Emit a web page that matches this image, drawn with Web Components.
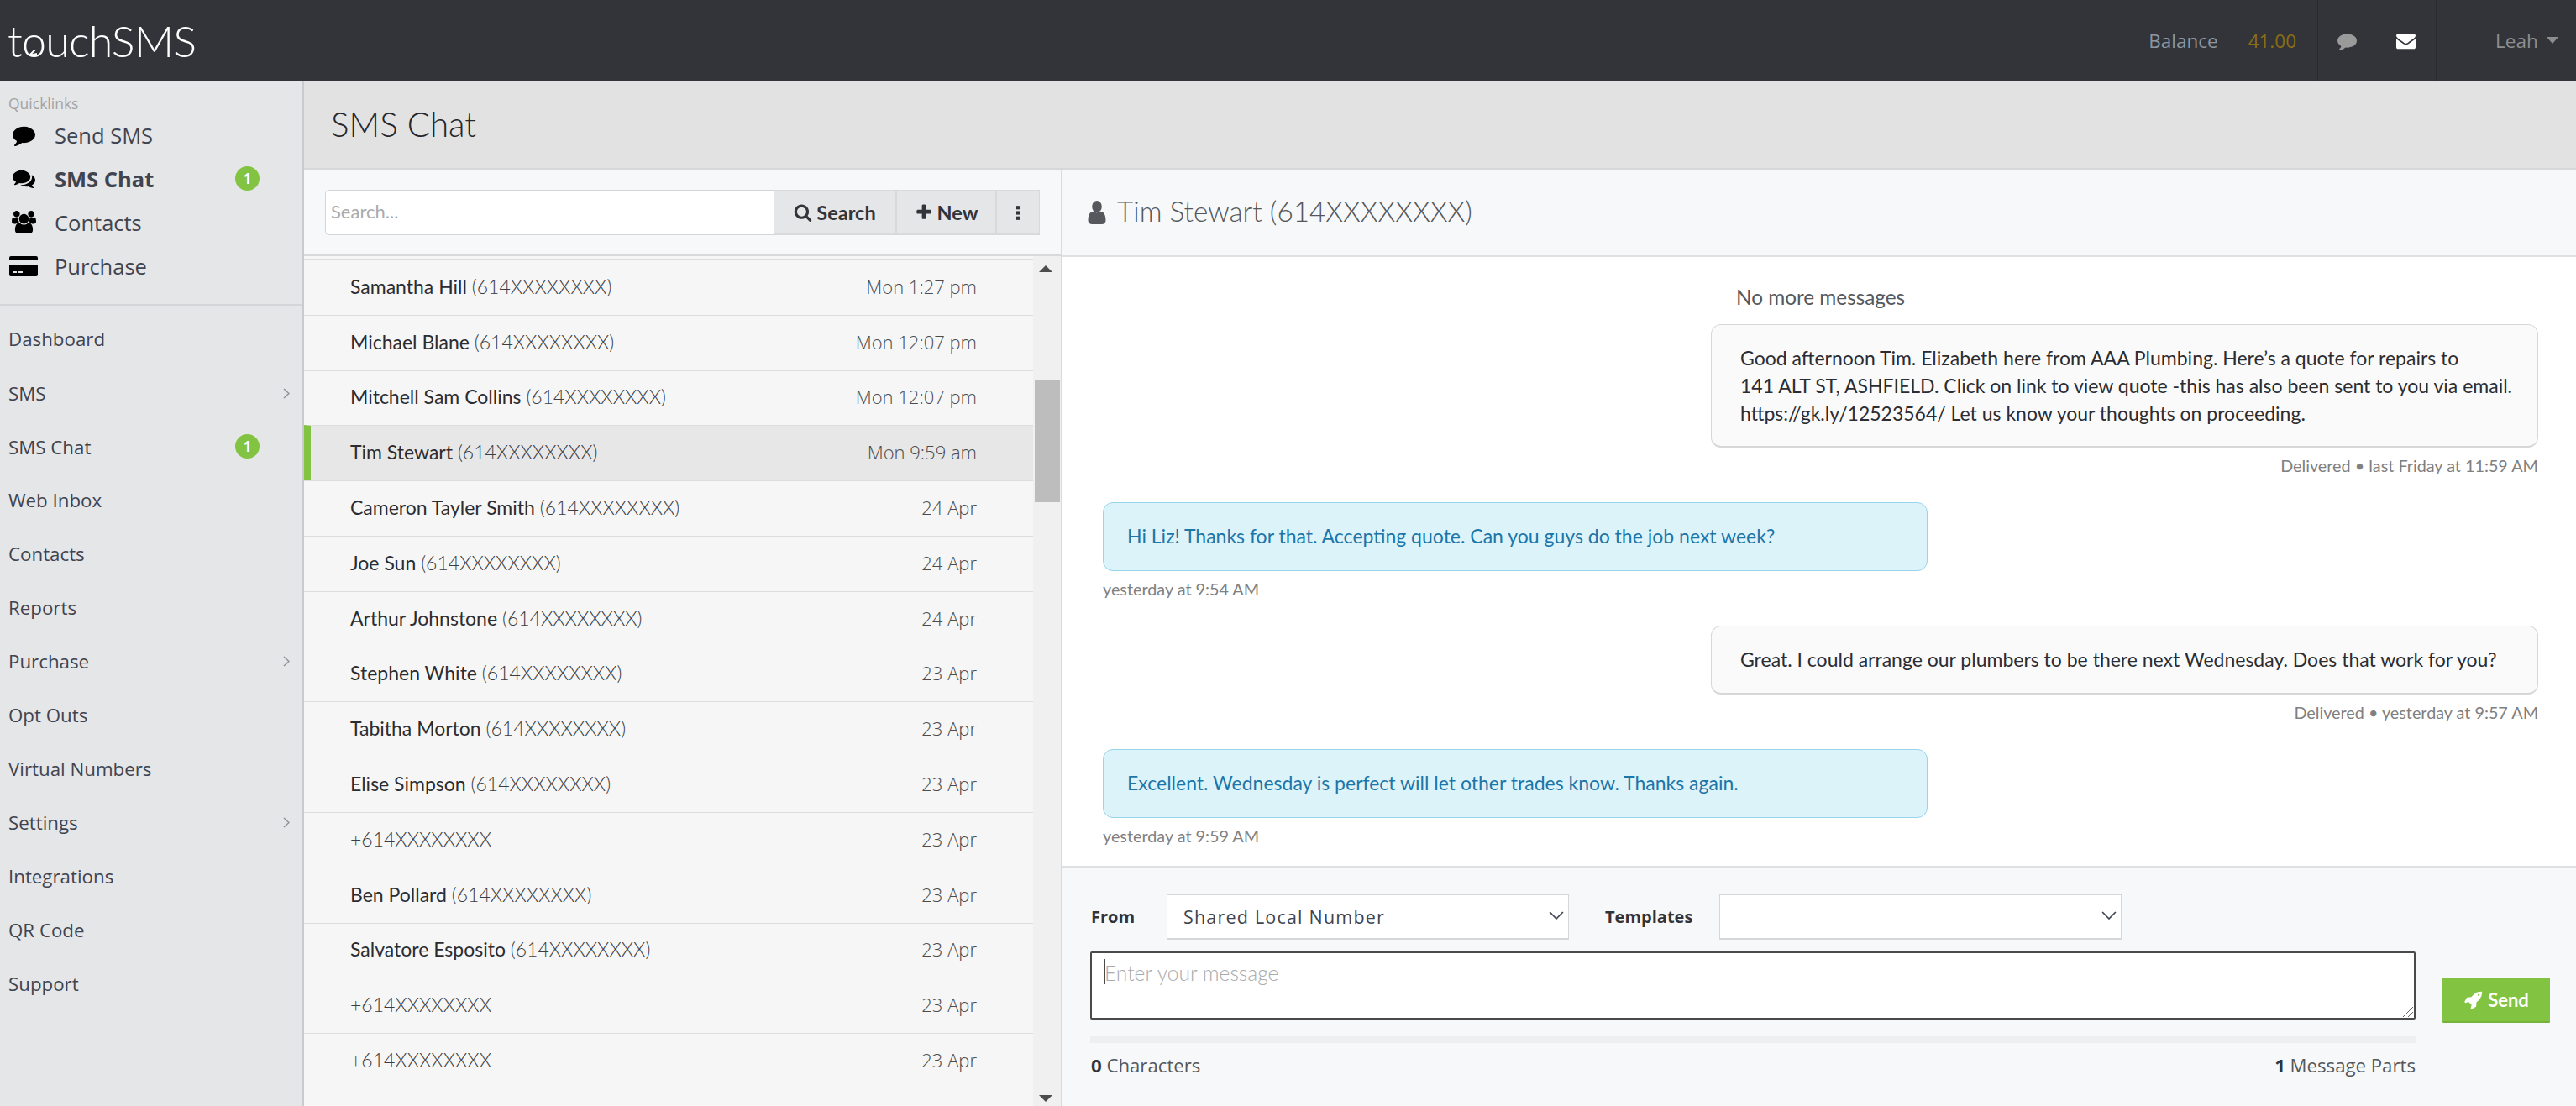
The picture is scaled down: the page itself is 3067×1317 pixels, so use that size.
<!DOCTYPE html>
<html>
<head>
<meta charset="utf-8">
<title>touchSMS - SMS Chat</title>
<style>
  html, body { margin: 0; height: 1317px; overflow: hidden; background: #f7f8f9; font-family: "Open Sans", sans-serif; }
</style>
</head>
<body>
<ts-app>
  <ts-topbar slot="top"></ts-topbar>
  <ts-sidebar slot="side">
    <ts-quicklink icon="comment">Send SMS</ts-quicklink>
    <ts-quicklink icon="comments" bold badge="1">SMS Chat</ts-quicklink>
    <ts-quicklink icon="users">Contacts</ts-quicklink>
    <ts-quicklink icon="card">Purchase</ts-quicklink>
    <ts-nav-item slot="nav" h="64">Dashboard</ts-nav-item>
    <ts-nav-item slot="nav" h="66" arrow>SMS</ts-nav-item>
    <ts-nav-item slot="nav" h="62" badge="1">SMS Chat</ts-nav-item>
    <ts-nav-item slot="nav" h="64">Web Inbox</ts-nav-item>
    <ts-nav-item slot="nav" h="64">Contacts</ts-nav-item>
    <ts-nav-item slot="nav" h="64">Reports</ts-nav-item>
    <ts-nav-item slot="nav" h="64" arrow>Purchase</ts-nav-item>
    <ts-nav-item slot="nav" h="64">Opt Outs</ts-nav-item>
    <ts-nav-item slot="nav" h="64">Virtual Numbers</ts-nav-item>
    <ts-nav-item slot="nav" h="64" arrow>Settings</ts-nav-item>
    <ts-nav-item slot="nav" h="64">Integrations</ts-nav-item>
    <ts-nav-item slot="nav" h="64">QR Code</ts-nav-item>
    <ts-nav-item slot="nav" h="64">Support</ts-nav-item>
  </ts-sidebar>
  <ts-title-bar slot="title">SMS Chat</ts-title-bar>
  <ts-chat-list slot="list">
    <ts-contact-row name="Samantha Hill" phone="(614XXXXXXXX)" time="Mon 1:27 pm"></ts-contact-row>
    <ts-contact-row name="Michael Blane" phone="(614XXXXXXXX)" time="Mon 12:07 pm"></ts-contact-row>
    <ts-contact-row name="Mitchell Sam Collins" phone="(614XXXXXXXX)" time="Mon 12:07 pm"></ts-contact-row>
    <ts-contact-row name="Tim Stewart" phone="(614XXXXXXXX)" time="Mon 9:59 am" active></ts-contact-row>
    <ts-contact-row name="Cameron Tayler Smith" phone="(614XXXXXXXX)" time="24 Apr"></ts-contact-row>
    <ts-contact-row name="Joe Sun" phone="(614XXXXXXXX)" time="24 Apr"></ts-contact-row>
    <ts-contact-row name="Arthur Johnstone" phone="(614XXXXXXXX)" time="24 Apr"></ts-contact-row>
    <ts-contact-row name="Stephen White" phone="(614XXXXXXXX)" time="23 Apr"></ts-contact-row>
    <ts-contact-row name="Tabitha Morton" phone="(614XXXXXXXX)" time="23 Apr"></ts-contact-row>
    <ts-contact-row name="Elise Simpson" phone="(614XXXXXXXX)" time="23 Apr"></ts-contact-row>
    <ts-contact-row phone="+614XXXXXXXX" time="23 Apr"></ts-contact-row>
    <ts-contact-row name="Ben Pollard" phone="(614XXXXXXXX)" time="23 Apr"></ts-contact-row>
    <ts-contact-row name="Salvatore Esposito" phone="(614XXXXXXXX)" time="23 Apr"></ts-contact-row>
    <ts-contact-row phone="+614XXXXXXXX" time="23 Apr"></ts-contact-row>
    <ts-contact-row phone="+614XXXXXXXX" time="23 Apr"></ts-contact-row>
  </ts-chat-list>
  <ts-conversation slot="chat">
    <ts-bubble dir="out" meta="Delivered • last Friday at 11:59 AM">Good afternoon Tim. Elizabeth here from AAA Plumbing. Here’s a quote for repairs to<br>141 ALT ST, ASHFIELD. Click on link to view quote -this has also been sent to you via email.<br>https://gk.ly/12523564/ Let us know your thoughts on proceeding.</ts-bubble>
    <ts-bubble dir="in" meta="yesterday at 9:54 AM">Hi Liz! Thanks for that. Accepting quote. Can you guys do the job next week?</ts-bubble>
    <ts-bubble dir="out" meta="Delivered • yesterday at 9:57 AM">Great. I could arrange our plumbers to be there next Wednesday. Does that work for you?</ts-bubble>
    <ts-bubble dir="in" meta="yesterday at 9:59 AM">Excellent. Wednesday is perfect will let other trades know. Thanks again.</ts-bubble>
  </ts-conversation>
</ts-app>

<script>
const ICONS = {
  comment: '<svg viewBox="0 0 1792 1792" fill="currentColor"><path d="M1792 896q0 174-120 321.500t-326 233-450 85.500q-70 0-145-8-198 175-460 242-49 14-114 22-17 2-30.500-9t-17.500-29v-1q-3-4-.5-12t2-10 4.500-9.500l6-9 7-8.500 8-9q7-8 31-34.500t34.500-38 31-39.500 32.500-51 27-59 26-76q-157-89-247.500-220t-90.500-281q0-130 71-248.500t191-204.500 286-136.500 348-50.500q244 0 450 85.500t326 233 120 321.500z"/></svg>',
  comments: '<svg viewBox="0 0 1792 1792" fill="currentColor"><path d="M1408 768q0 139-94 257t-256.500 186.500-353.500 68.500q-86 0-176-16-124 88-278 128-36 9-86 16h-3q-11 0-20.500-8t-11.500-21q-1-3-1-6.500t.5-6.500 2-6l2.500-5 3.500-5.500 4-5 4.500-5 4-4.500q5-6 23-25t26-29.500 22.500-29 25-38.500 20.500-44q-124-72-195-177t-71-224q0-139 94-257t256.500-186.500 353.500-68.500 353.500 68.500 256.500 186.500 94 257zm384 256q0 120-71 224.500t-195 176.500q10 24 20.500 44t25 38.500 22.500 29 26 29.500 23 25q1 1 4 4.500t4.500 5 4 5 3.500 5.500l2.500 5 2 6 .5 6.500-1 6.500q-3 14-13 22t-22 7q-50-7-86-16-154-40-278-128-90 16-176 16-271 0-472-132 58 4 88 4 161 0 309-45t264-129q125-92 192-212t67-254q0-77-23-152 129 71 204 178t75 230z"/></svg>',
  users: '<svg viewBox="0 0 1920 1792" fill="currentColor"><path d="M593 896q-162 5-265 128h-134q-82 0-138-40.500t-56-118.500q0-353 124-353 6 0 43.500 21t97.500 42.500 119 21.500q67 0 133-23-5 37-5 66 0 139 81 256zm1071 637q0 120-73 189.500t-194 69.500h-874q-121 0-194-69.500t-73-189.500q0-53 3.500-103.500t14-109 26.500-108.500 43-97.500 62-81 85.500-53.500 111.500-20q10 0 43 21.500t73 48 107 48 135 21.500 135-21.500 107-48 73-48 43-21.500q61 0 111.500 20t85.500 53.500 62 81 43 97.500 26.500 108.500 14 109 3.500 103.500zm-1024-1277q0 106-75 181t-181 75-181-75-75-181 75-181 181-75 181 75 75 181zm704 384q0 159-112.500 271.500t-271.500 112.500-271.500-112.500-112.500-271.500 112.500-271.500 271.500-112.500 271.500 112.500 112.500 271.500zm576 225q0 78-56 118.500t-138 40.500h-134q-103-123-265-128 81-117 81-256 0-29-5-66 66 23 133 23 59 0 119-21.500t97.500-42.500 43.500-21q124 0 124 353zm-128-609q0 106-75 181t-181 75-181-75-75-181 75-181 181-75 181 75 75 181z"/></svg>',
  card: '<svg viewBox="0 0 34 24" fill="currentColor"><path d="M2 0h30a2 2 0 0 1 2 2v3H0V2a2 2 0 0 1 2-2zM0 11h34v11a2 2 0 0 1-2 2H2a2 2 0 0 1-2-2zm4 7v2h5v-2zm7 0v2h5v-2z" fill-rule="evenodd"/></svg>',
  user: '<svg viewBox="320 128 1152 1536" fill="currentColor"><path d="M1472 1405q0 120-73 189.500t-194 69.500h-618q-121 0-194-69.500t-73-189.500q0-53 3.500-103.500t14-109 26.500-108.500 43-97.500 62-81 85.500-53.500 111.500-20q9 0 42 21.500t45 27 80 21 61 6 61-6 80-21 45-27 42-21.500q61 0 111.500 20t85.500 53.500 62 81 43 97.500 26.500 108.500 14 109 3.500 103.500zm-256-893q0 159-94 271.500t-226 112.500-226-112.500-94-271.500 94-271.500 226-112.500 226 112.500 94 271.500z"/></svg>',
  search: '<svg viewBox="0 0 1792 1792" fill="currentColor"><path d="M1216 832q0-185-131.500-316.500t-316.500-131.500-316.500 131.500-131.500 316.500 131.500 316.500 316.500 131.500 316.500-131.500 131.500-316.500zm512 832q0 52-38 90t-90 38q-54 0-90-38l-343-342q-179 124-399 124-143 0-273.500-55.500t-225-150-150-225-55.500-273.500 55.500-273.500 150-225 225-150 273.500-55.500 273.500 55.500 225 150 150 225 55.500 273.500q0 220-124 399l343 343q37 37 37 90z"/></svg>',
  plus: '<svg viewBox="0 0 1792 1792" fill="currentColor"><path d="M1600 736v192q0 40-28 68t-68 28h-416v416q0 40-28 68t-68 28h-192q-40 0-68-28t-28-68v-416h-416q-40 0-68-28t-28-68v-192q0-40 28-68t68-28h416v-416q0-40 28-68t68-28h192q40 0 68 28t28 68v416h416q40 0 68 28t28 68z"/></svg>',
  rocket: '<svg viewBox="0 0 1792 1792" fill="currentColor"><path d="M1504 448q0-40-28-68t-68-28-68 28-28 68 28 68 68 28 68-28 28-68zm224-288q0 249-75.500 430.500t-253.500 360.500q-81 80-195 176l-20 379q-2 16-16 26l-384 224q-7 4-16 4-12 0-23-9l-64-64q-13-14-8-32l85-276-281-281-276 85q-3 1-9 1-14 0-23-9l-64-64q-17-19-5-39l224-384q10-14 26-16l379-20q96-114 176-195 188-187 358-258t431-71q14 0 24 9.500t10 22.500z"/></svg>',
  envelope: '<svg viewBox="0 128 1792 1536" fill="currentColor"><path d="M1792 710v794q0 66-47 113t-113 47h-1472q-66 0-113-47t-47-113v-794q44 49 101 87 362 246 497 345 57 42 92.500 65.500t94.500 48 110 24.500h2q51 0 110-24.500t94.500-48 92.500-65.500q170-123 498-345 57-39 100-87zm0-294q0 79-49 151t-122 123q-376 261-468 325-10 7-42.500 30.500t-54 38-52 32.500-57.500 27-50 9h-2q-23 0-50-9t-57.500-27-52-32.500-54-38-42.500-30.500q-91-64-262-182.500t-205-142.500q-62-42-117-115.500t-55-136.500q0-78 41.500-130t118.500-52h1472q65 0 112.500 47t47.500 113z"/></svg>'
};

// small helper so each element only declares its css + markup
function defineEl(tag, css, html, setup) {
  customElements.define(tag, class extends HTMLElement {
    connectedCallback() {
      if (this.shadowRoot) return;
      const root = this.attachShadow({ mode: 'open' });
      root.innerHTML = `<style>${css}</style>${typeof html === 'function' ? html(this) : html}`;
      if (setup) setup(this, root);
    }
  });
}

defineEl('ts-app', `
  :host { display: grid; grid-template-columns: 362px 903px 1fr; grid-template-rows: 96px 106px 1fr; width: 3067px; height: 1317px; overflow: hidden; }
  .top { grid-column: 1 / -1; }
  .side { grid-row: 2 / 4; display: grid; }
  .title { grid-column: 2 / -1; display: grid; }
  .list, .chat { display: grid; min-height: 0; min-width: 0; }
`, `
  <div class="top"><slot name="top"></slot></div>
  <div class="side"><slot name="side"></slot></div>
  <div class="title"><slot name="title"></slot></div>
  <div class="list"><slot name="list"></slot></div>
  <div class="chat"><slot name="chat"></slot></div>
`);

defineEl('ts-topbar', `
  :host { display: flex; height: 96px; background: #32343a; align-items: center; color: #8f969d; font: 400 22.500px "Open Sans", sans-serif; }
  .logo { position: relative; margin-left: 9px; font: 300 52px/96px Lato, sans-serif; color: #fff; letter-spacing: -.8px; }
  .tail { position: absolute; left: 25px; top: 59px; width: 12px; height: 8px; }
  .right { margin-left: auto; display: flex; align-items: stretch; height: 96px; }
  .bal { display: flex; align-items: center; gap: 36px; padding-right: 25px; }
  .amt { color: #8a6d14; }
  .icons { box-sizing: border-box; display: flex; align-items: center; gap: 47px; padding-left: 23px; width: 142px; border-left: 1px solid #2a2b30; border-right: 1px solid #2a2b30; }
  .icons svg { display: block; width: 23px; height: 23px; }
  .c { color: #9a9a9a; }
  .e { color: #fff; }
  .user { box-sizing: border-box; width: 166px; display: flex; align-items: center; gap: 10px; padding-left: 70px; color: #8e8e8e; }
  .caret { width: 0; height: 0; border: 7px solid transparent; border-top: 8px solid #8e8e8e; border-bottom: 0; }
`, `
  <div class="logo">touchSMS<svg class="tail" viewBox="0 0 12 8"><path d="M8 0 1 7l9-2" fill="none" stroke="#fff" stroke-width="2"/></svg></div>
  <div class="right">
    <div class="bal"><span>Balance</span><span class="amt">41.00</span></div>
    <div class="icons"><span class="c">${ICONS.comment}</span><span class="e">${ICONS.envelope}</span></div>
    <div class="user">Leah<span class="caret"></span></div>
  </div>
`);

defineEl('ts-sidebar', `
  :host { display: block; background: #e5e6e8; border-right: 2px solid #c9cbce; box-sizing: border-box; overflow: hidden; }
  .q { font: 400 17.500px/22.500px "Open Sans", sans-serif; color: #a2a3a5; padding: 16px 10px 0; }
  .quick { height: 268px; box-sizing: border-box; border-bottom: 2px solid #d3d5d8; margin: 0; }
  nav { padding-top: 7px; }
`, `
  <div class="quick"><div class="q">Quicklinks</div><slot></slot></div>
  <nav><slot name="nav"></slot></nav>
`);

defineEl('ts-quicklink', `
  :host { display: flex; align-items: center; height: 52px; color: #3f4450; font: 400 25.500px "Open Sans", sans-serif; position: relative; }
  :host([bold]) { font-weight: 700; }
  .ic { box-sizing: border-box; width: 65px; padding-left: 15px; flex: none; color: #000; }
  .ic svg { display: block; width: 27px; height: 27px; }
  :host([icon="users"]) .ic { padding-left: 14px; }
  :host([icon="users"]) .ic svg { width: 29px; }
  :host([icon="card"]) .ic { padding-left: 11px; }
  :host([icon="card"]) .ic svg { width: 34px; height: 24px; }
  .b { position: absolute; left: 280px; top: 11px; }
`, h => `<span class="ic">${ICONS[h.getAttribute('icon')]}</span><slot></slot>${h.hasAttribute('badge') ? `<ts-badge class="b">${h.getAttribute('badge')}</ts-badge>` : ''}`);

defineEl('ts-badge', `
  :host { display: flex; align-items: center; justify-content: center; width: 29px; height: 29px; border-radius: 50%; background: #82c341; color: #fff; font: 700 17px "Open Sans", sans-serif; }
`, `<slot></slot>`);

defineEl('ts-nav-item', `
  :host { display: flex; align-items: center; color: #3f4450; font: 400 22.300px "Open Sans", sans-serif; padding: 0 10px; position: relative; }
  svg { position: absolute; left: 337px; top: 50%; margin-top: -6px; width: 8px; height: 13px; }
  .b { position: absolute; left: 280px; top: 50%; margin-top: -15px; }
`, h => `<slot></slot>${h.hasAttribute('arrow') ? '<svg viewBox="0 0 8 13"><path d="M1 1l6 5.500L1 12" fill="none" stroke="#8d9199" stroke-width="1.500"/></svg>' : ''}${h.hasAttribute('badge') ? `<ts-badge class="b">${h.getAttribute('badge')}</ts-badge>` : ''}`,
  h => { h.style.height = h.getAttribute('h') + 'px'; });

defineEl('ts-title-bar', `
  :host { display: flex; align-items: center; box-sizing: border-box; height: 106px; background: #e2e2e2; border-bottom: 2px solid #d6d7d9; padding: 0 32px 2px 32px; color: #25272c; font: 300 40.300px Lato, sans-serif; }
`, `<slot></slot>`);

defineEl('ts-chat-list', `
  :host { display: flex; flex-direction: column; min-height: 0; background: #f7f8f9; border-right: 2px solid #d9dadc; overflow: hidden; }
  .bar { flex: none; height: 103px; box-sizing: border-box; border-bottom: 2px solid #d8d9db; padding: 24px 25px 0 25px; display: flex; }
  .field { flex: 1; box-sizing: border-box; height: 54px; background: #fff; border: 1px solid #d4d5d7; border-right: 0; border-radius: 5px 0 0 5px; padding-left: 6px; font: 400 22px/50px Lato, sans-serif; color: #a9abae; }
  .btn { display: flex; align-items: center; justify-content: center; gap: 5px; box-sizing: border-box; height: 54px; background: #e5e6e8; border: 2px solid #d8d9db; border-left-width: 1px; border-right-width: 1px; color: #32343a; font: 700 23.500px Lato, sans-serif; }
  .btn svg { width: 22px; height: 22px; display: block; }
  .s { width: 146px; } .n { width: 119px; } .m { width: 52px; }
  .m svg { width: 5px; height: 17px; }
  .body { flex: 1; min-height: 0; display: flex; }
  .rows { flex: 1; padding-top: 4px; overflow: hidden; background: #f6f6f6; }
  .rows ::slotted(*) { border-top: 1px solid #ddd; }
  .sb { flex: none; width: 33px; background: #f0f0f0; position: relative; }
  .up, .dn { position: absolute; left: 7px; width: 0; height: 0; border: 8px solid transparent; }
  .up { top: 11px; border-top: 0; border-bottom: 8px solid #4d4d4d; }
  .dn { bottom: 5px; border-bottom: 0; border-top: 8px solid #4d4d4d; }
  .th { position: absolute; left: 2px; top: 147px; width: 30px; height: 146px; background: #bdbdbd; }
`, `
  <div class="bar">
    <div class="field">Search...</div>
    <div class="btn s">${ICONS.search}Search</div>
    <div class="btn n">${ICONS.plus}New</div>
    <div class="btn m"><svg viewBox="0 0 6 20" fill="#32343a"><rect width="6" height="5"/><rect y="7.500" width="6" height="5"/><rect y="15" width="6" height="5"/></svg></div>
  </div>
  <div class="body">
    <div class="rows"><slot></slot></div>
    <div class="sb"><span class="up"></span><span class="th"></span><span class="dn"></span></div>
  </div>
`);

defineEl('ts-contact-row', `
  :host { display: flex; justify-content: space-between; align-items: center; box-sizing: border-box; height: 65.800px; padding: 0 67px 3px 55px; background: #f6f6f6; }
  :host([active]) { background: #e7e7e7; border-left: 8px solid #82c341; padding-left: 47px; }
  .name { font: 400 23px Lato, sans-serif; color: #2b2d33; }
  .ph { font-weight: 300; color: #3c3e44; }
  .time { font: 300 22px "Open Sans", sans-serif; color: #4c4c4c; }
`, h => {
  const name = h.getAttribute('name');
  const ph = h.getAttribute('phone');
  return `<span class="name">${name ? name + ' ' : ''}<span class="ph">${ph}</span></span><span class="time">${h.getAttribute('time')}</span>`;
});

defineEl('ts-conversation', `
  :host { display: flex; flex-direction: column; min-height: 0; background: #fff; }
  .head { flex: none; display: flex; align-items: center; gap: 13px; box-sizing: border-box; height: 104px; padding: 0 0 4px 30px; background: #f7f8f9; border-bottom: 2px solid #dfe0e2; color: #55585d; font: 300 33.300px Lato, sans-serif; }
  .head svg { display: block; width: 22px; height: 28px; margin-top: 4px; }
  .msgs { flex: 1; min-height: 0; overflow: hidden; padding: 33px 45px 0 48px; }
  .more { font: 400 24.300px/30px Lato, sans-serif; color: #55585d; padding-left: 754px; margin-bottom: 17px; }
`, `
  <div class="head">${ICONS.user}<span>Tim Stewart (614XXXXXXXX)</span></div>
  <div class="msgs"><div class="more">No more messages</div><slot></slot></div>
  <ts-composer></ts-composer>
`);

defineEl('ts-bubble', `
  :host { display: block; margin-bottom: 31px; font: 400 23px/33px Lato, sans-serif; }
  .b { box-sizing: border-box; width: 985px; min-height: 82px; padding: 23px 20px 22px 34px; border-radius: 12px; color: #2b2d33; background: #fafafa; border: 1px solid #d6d7d9; border-bottom-width: 2px; }
  :host([dir="out"]) .b { margin-left: auto; }
  :host([dir="in"]) .b { width: 982px; background: #dcf3fa; border: 1px solid #96d5ea; color: #1d76a8; padding: 23px 20px 23px 28px; }
  .m { font: 400 19.800px/26px Lato, sans-serif; color: #808080; margin-top: 8px; }
  :host([dir="out"]) .m { text-align: right; }
`, h => `<div class="b"><slot></slot></div><div class="m">${h.getAttribute('meta')}</div>`);

defineEl('ts-composer', `
  :host { flex: none; display: block; box-sizing: border-box; height: 286px; background: #f7f8f9; border-top: 2px solid #dfe0e2; padding: 31px 31px 0 34px; color: #3f4450; font: 400 22px Lato, sans-serif; position: relative; }
  .r1 { display: flex; align-items: center; height: 55px; }
  label { flex: none; font: 700 20px "Open Sans", sans-serif; color: #32343a; }
  .lf { width: 90px; }
  .tl { width: 136px; margin-left: 43px; }
  .sel { box-sizing: border-box; display: flex; justify-content: space-between; align-items: center; width: 479px; height: 55px; background: #fff; border: 1px solid #d6d7d9; border-top-width: 2px; border-bottom-width: 2px; padding: 0 5px 0 19px; font: 400 21.500px "Open Sans", sans-serif; color: #3f4450; letter-spacing: 1.200px; }
  .sel svg { width: 18px; height: 10px; margin-top: -4px; }
  .mid { display: flex; margin: 14px 0 0 -1px; }
  .ta { box-sizing: border-box; width: 1578px; height: 81px; background: #fff; border: 2px solid #4a4a4a; border-radius: 2px; padding: 9px 13px 0 15px; color: #a9abae; font: 300 24.600px Lato, sans-serif; position: relative; }
  .ta::before { content: ""; position: absolute; left: 14px; top: 7px; width: 2px; height: 30px; background: #4a4a4a; }
  .grip { position: absolute; right: 0; bottom: 0; width: 14px; height: 14px; }
  .send { box-sizing: border-box; width: 128px; height: 54px; margin: 31px 0 0 32px; background: #82c341; border-bottom: 2px solid #75b339; color: #fff; font: 700 22px Lato, sans-serif; display: flex; align-items: center; justify-content: center; gap: 6px; border-radius: 1px; }
  .send svg { width: 23px; height: 23px; display: block; }
  .prog { width: 1578px; height: 8px; margin: 16px 0 0 -1px; background: #eeeff1; }
  .counts { width: 1577px; display: flex; justify-content: space-between; margin-top: 11px; font: 400 22.200px "Open Sans", sans-serif; color: #55585d; }
  b { color: #32343a; }
`, `
  <div class="r1">
    <label class="lf">From</label>
    <div class="sel from">Shared Local Number<svg viewBox="0 0 16 10" preserveAspectRatio="none"><path d="M1 1l7 8 7-8" fill="none" stroke="#3f4450" stroke-width="1.500"/></svg></div>
    <label class="tl">Templates</label>
    <div class="sel tmp"><span></span><svg viewBox="0 0 16 10" preserveAspectRatio="none"><path d="M1 1l7 8 7-8" fill="none" stroke="#3f4450" stroke-width="1.500"/></svg></div>
  </div>
  <div class="mid">
    <div class="ta">Enter your message<svg class="grip" viewBox="0 0 14 14"><path d="M13 1 1 13M13 7l-6 6" stroke="#666" fill="none"/></svg></div>
    <div class="send">${ICONS.rocket}Send</div>
  </div>
  <div class="prog"></div>
  <div class="counts"><span><b>0</b> Characters</span><span><b>1</b> Message Parts</span></div>
`);
</script>
</body>
</html>
